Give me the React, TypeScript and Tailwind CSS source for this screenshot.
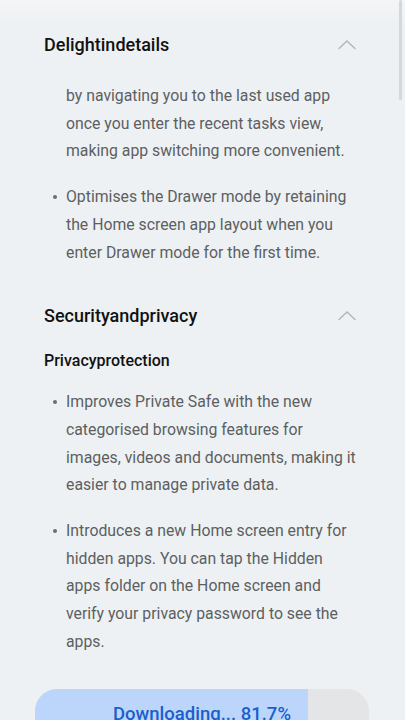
import React from "react";

const font = { fontFamily: "Roboto, 'Noto Sans', sans-serif" };

function Chevron() {
  return (
    <svg width="20" height="12" viewBox="0 0 20 12" className="shrink-0">
      <path d="M1.5 10 L10 2 L18.5 10" fill="none" stroke="#b4b7ba" strokeWidth="1.4" />
    </svg>
  );
}

function Heading({ title }: { title: string }) {
  return (
    <div className="flex items-center justify-between pr-[48px]">
      <h3 className="text-[18px] leading-6 font-medium text-[#111]">{title}</h3>
      <Chevron />
    </div>
  );
}

function Bullet({ children, first }: { children: React.ReactNode; first?: boolean }) {
  return (
    <div className={`relative pl-[22px] ${first ? "" : "mt-[18px]"}`}>
      <span className="absolute left-[9px] top-[12px] w-[4px] h-[4px] rounded-full bg-[#6b6e71]" />
      <p className="text-[15.8px] leading-[27.7px] text-[#5c5f62]">{children}</p>
    </div>
  );
}

export default function App() {
  const progress = 81.7;
  return (
    <div className="relative h-[720px] w-[405px] overflow-hidden bg-[#eef1f3]" style={font}>
      <div className="absolute inset-x-0 top-0 h-[22px] bg-gradient-to-b from-[#f4f5f6] to-transparent" />
      <div className="absolute right-[3px] top-0 w-[3px] h-[100px] rounded-full bg-[#d5d8db]" />

      <div className="pl-[44px] pt-[33px]">
        <Heading title="Delightindetails" />
        <div className="mt-[25px] pr-[44px]">
          <p className="pl-[22px] text-[15.8px] leading-[27.7px] text-[#5c5f62]">
            by navigating you to the last used app once you enter the recent tasks view, making app switching more convenient.
          </p>
          <Bullet>
            Optimises the Drawer mode by retaining the Home screen app layout when you enter Drawer mode for the first time.
          </Bullet>
        </div>

        <div className="mt-[38px]">
          <Heading title="Securityandprivacy" />
        </div>
        <h4 className="mt-[23px] text-[16px] leading-5 font-medium text-[#111]">Privacyprotection</h4>
        <div className="mt-[17px] pr-[44px]">
          <Bullet first>
            Improves Private Safe with the new categorised browsing features for images, videos and documents, making it easier to manage private data.
          </Bullet>
          <Bullet>
            Introduces a new Home screen entry for hidden apps. You can tap the Hidden apps folder on the Home screen and verify your privacy password to see the apps.
          </Bullet>
        </div>
      </div>

      <div className="absolute inset-x-0 bottom-0 h-[60px] bg-gradient-to-b from-transparent to-[#eef1f3]" />
      <div className="absolute left-[35px] right-[36px] top-[689px]">
        <div className="relative h-[52px] overflow-hidden rounded-[22px] bg-[#e4e5e7]">
          <div className="absolute inset-y-0 left-0 bg-[#bcd6fb]" style={{ width: `${progress}%` }} />
          <div className="relative flex h-full items-start justify-center pt-[12px] text-[18.5px] font-medium text-[#1a5fcc]">
            Downloading... {progress}%
          </div>
        </div>
      </div>
    </div>
  );
}
